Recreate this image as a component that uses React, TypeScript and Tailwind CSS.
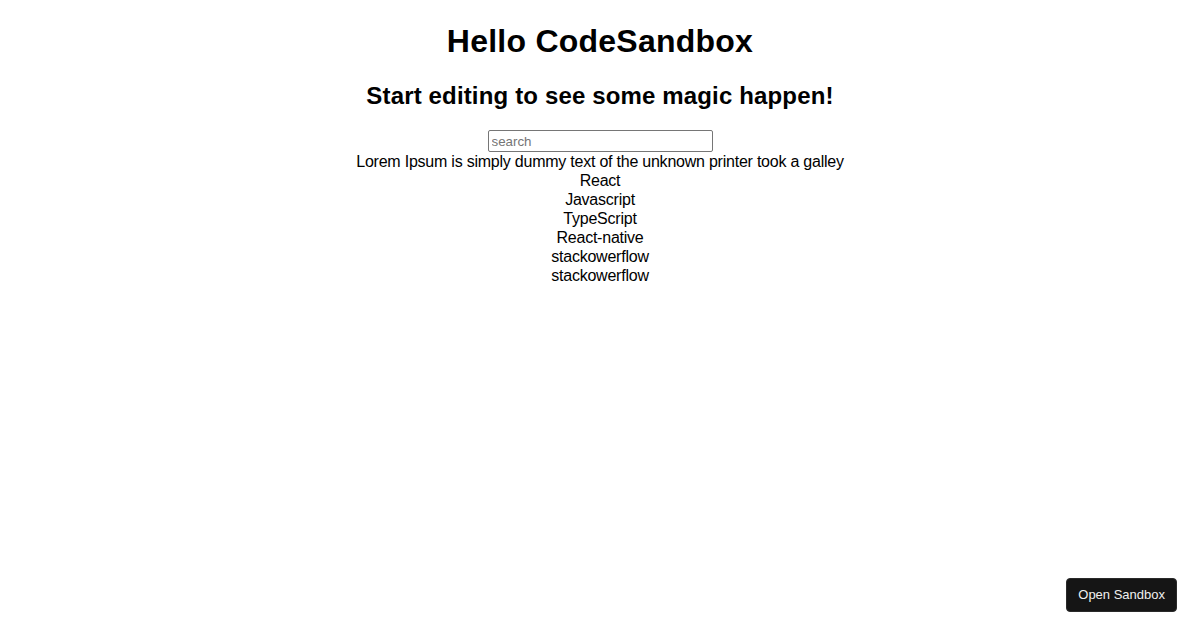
import React from "react"

const items = [
  "Lorem Ipsum is simply dummy text of the unknown printer took a galley",
  "React",
  "Javascript",
  "TypeScript",
  "React-native",
  "stackowerflow",
  "stackowerflow",
]

export default function App() {
  return (
    <div className="relative h-[630px] w-full bg-white text-black" style={{ fontFamily: '"Liberation Sans", Arial, sans-serif' }}>
      <div className="text-center">
        <h1 className="pt-[23px] text-[32px] font-bold leading-[37px] tracking-[0.24px]">Hello CodeSandbox</h1>
        <h2 className="mt-[22px] text-[24px] font-bold leading-[28px] tracking-[0.15px]">Start editing to see some magic happen!</h2>
        <div className="mt-[20px] flex flex-col items-center">
          <input
            type="text"
            placeholder="search"
            className="h-[22px] w-[225px] rounded-[2px] border border-[#767676] px-[3px] text-[13.33px] placeholder:text-[#757575] outline-none"
          />
          <ul className="text-[16px] leading-[19px] tracking-[-0.23px]">
            {items.map((item, i) => (
              <li key={i}>{item}</li>
            ))}
          </ul>
        </div>
      </div>
      <button className="absolute bottom-[18px] right-[23px] h-[34px] rounded-[4px] border border-[#2a2a2a] bg-[#151515] px-[11px] text-[13px] text-[#f0f0f0]">
        Open Sandbox
      </button>
    </div>
  )
}
